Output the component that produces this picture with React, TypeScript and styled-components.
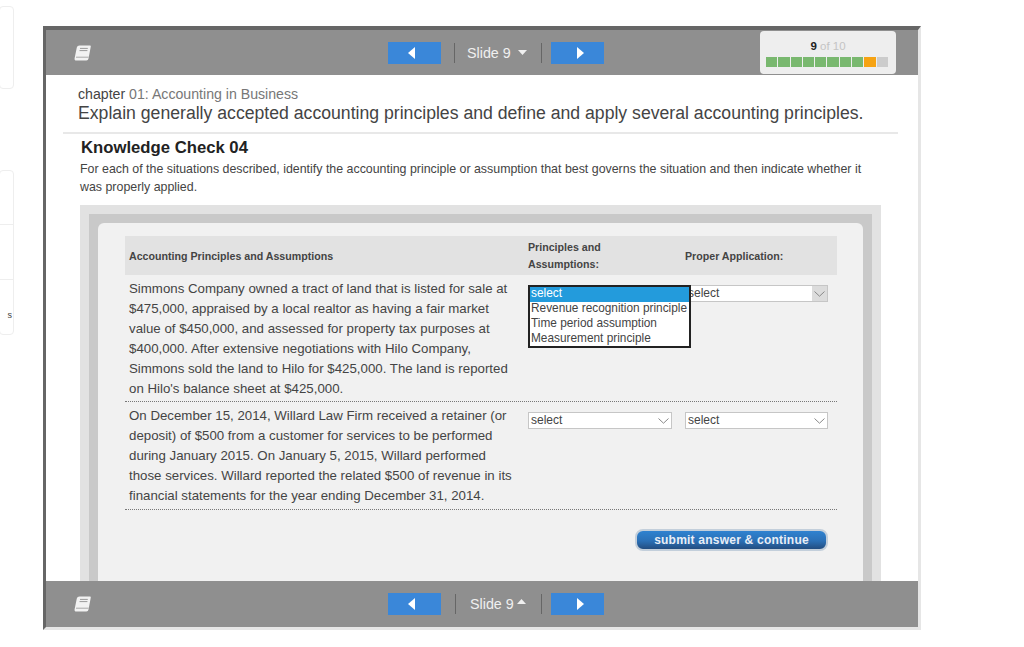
import { createGlobalStyle, styled } from "styled-components";

const GlobalStyle = createGlobalStyle`
  html, body {
    margin: 0;
    padding: 0;
    background: #fff;
    font-family: "Liberation Sans", Arial, sans-serif;
  }
`;

const Page = styled.div`
  display: flex;
  width: 1024px;
  height: 647px;
  overflow: hidden;
  background: #fff;
`;

const Sidebar = styled.aside`
  display: flex;
  flex-direction: column;
  width: 15px;
  margin-left: -1px;
  padding-top: 6px;
  gap: 81px;
  flex: none;
`;

const SideCard = styled.div`
  box-sizing: border-box;
  border: 1px solid #eeeeee;
  border-radius: 4px;
  background: #fff;
`;

const SideRow = styled.div<{ $height: number }>`
  box-sizing: border-box;
  height: ${({ $height }) => $height}px;
  border-bottom: 1px solid #eeeeee;
  font-size: 9px;
  line-height: ${({ $height }) => $height + 16}px;
  color: #444;
  text-align: right;
  padding-right: 1px;

  &:last-child {
    border-bottom: none;
  }
`;

const Frame = styled.div`
  box-sizing: border-box;
  width: 878px;
  height: 604px;
  margin: 26px 0 0 29px;
  display: flex;
  flex-direction: column;
  flex: none;
  border-top: 4px solid #666666;
  border-left: 3px solid #666666;
  border-right: 3px solid #e6e6e6;
  border-bottom: 3px solid #e6e6e6;
`;

const Bar = styled.div<{ $height: number }>`
  display: flex;
  align-items: center;
  height: ${({ $height }) => $height}px;
  flex: none;
  background: #8f8f8f;
`;

const BookButton = styled.div`
  display: flex;
  margin-left: 28px;
  width: 18px;
`;

const Nav = styled.nav`
  display: flex;
  align-items: center;
  margin-left: 296px;
  height: 22px;
`;

const NavButton = styled.div`
  box-sizing: border-box;
  display: flex;
  align-items: center;
  justify-content: center;
  width: 53px;
  height: 22px;
  padding-right: 6px;
  background: #3a87d9;
`;

const NextButton = styled(NavButton)`
  margin-left: 9px;
  padding-right: 0;
  padding-left: 5px;
`;

const Separator = styled.div<{ $gap?: number }>`
  width: 1px;
  height: 20px;
  margin-left: ${({ $gap = 0 }) => $gap}px;
  background: #666;
`;

const SlideLabel = styled.div<{ $width: number; $indent: number }>`
  display: flex;
  align-items: center;
  box-sizing: border-box;
  width: ${({ $width }) => $width}px;
  padding-left: ${({ $indent }) => $indent}px;
  font-size: 14.3px;
  color: #f0f0f0;
  white-space: nowrap;
`;

const CaretSlot = styled.span<{ $up?: boolean }>`
  display: flex;
  margin-left: ${({ $up }) => ($up ? 3 : 7)}px;
  margin-bottom: ${({ $up }) => ($up ? 6 : 0)}px;
`;

const Progress = styled.div`
  box-sizing: border-box;
  width: 136px;
  height: 43px;
  margin-left: auto;
  margin-right: 22px;
  padding: 9px 6px 0;
  background: #eeeeee;
  border-radius: 4px;
`;

const ProgressText = styled.div`
  font-size: 11.5px;
  line-height: 12px;
  text-align: center;
  color: #c4c4c4;

  b {
    color: #222;
  }
`;

const Steps = styled.div`
  display: flex;
  gap: 1px;
  margin-top: 5px;
`;

const Step = styled.div<{ $color: string }>`
  width: 11.3px;
  height: 10px;
  background: ${({ $color }) => $color};
`;

const Body = styled.main`
  flex: 1;
  min-height: 0;
  overflow: hidden;
  background: #fff;
  display: flex;
  flex-direction: column;
`;

const Heading = styled.header`
  box-sizing: border-box;
  height: 59px;
  margin: 0 20px 0 17px;
  padding: 11px 0 0 15px;
  border-bottom: 2px solid #e8e8e8;
  flex: none;
`;

const Chapter = styled.div`
  font-size: 14.15px;
  line-height: 17px;
  color: #777;

  b {
    font-weight: normal;
    color: #444;
  }
`;

const Title = styled.h1`
  margin: 0;
  font-size: 17.65px;
  font-weight: normal;
  line-height: 21px;
  color: #444;
  white-space: nowrap;
`;

const Content = styled.section`
  padding: 4px 37px 0 35px;
  flex: 1;
  display: flex;
  flex-direction: column;
  min-height: 0;
`;

const CheckTitle = styled.h2`
  margin: 0;
  font-size: 16.7px;
  line-height: 20px;
  color: #222;
`;

const Prompt = styled.p`
  max-width: 788px;
  margin: 2px 0 9px -1px;
  font-size: 12.4px;
  line-height: 18px;
  color: #444;
`;

const OuterBox = styled.div`
  flex: 1;
  margin-left: -1px;
  padding: 9px 9px 0;
  background: #e2e2e2;
  display: flex;
`;

const MiddleBox = styled.div`
  flex: 1;
  padding: 9px 9px 0;
  background: #c9c9c9;
  display: flex;
`;

const Panel = styled.div`
  flex: 1;
  box-sizing: border-box;
  padding: 13px 26px 0 27px;
  background: #f1f1f1;
  border-radius: 6px 6px 0 0;
`;

const QuizRow = styled.div`
  display: grid;
  grid-template-columns: 403px 157px 152px;
`;

const HeaderRow = styled(QuizRow)`
  box-sizing: border-box;
  height: 39px;
  padding-top: 1px;
  align-items: center;
  background: #e2e2e2;
  font-size: 10.65px;
  font-weight: bold;
  line-height: 17px;
  color: #444;
`;

const FirstHeader = styled.div`
  padding-left: 4px;
`;

const Question = styled(QuizRow)<{ $bottom: number }>`
  padding: 4px 0 ${({ $bottom }) => $bottom}px;
  border-bottom: 1px dotted #777;
`;

const QuestionText = styled.div`
  padding-left: 4px;
  width: 386px;
  font-size: 13.27px;
  line-height: 20px;
  color: #444;
`;

const SelectCell = styled.div`
  position: relative;
  padding-top: 6px;
`;

const Select = styled.div<{ $width: number }>`
  box-sizing: border-box;
  display: flex;
  align-items: center;
  justify-content: space-between;
  width: ${({ $width }) => $width}px;
  height: 17px;
  padding: 0 0 2px 2px;
  background: #fff;
  border: 1px solid #c6c6c6;
  font-size: 12px;
  color: #444;
`;

const Chevron = styled.span<{ $boxed?: boolean }>`
  display: flex;
  align-self: flex-start;
  align-items: center;
  justify-content: center;
  width: 15px;
  height: 15px;
  background: ${({ $boxed }) => ($boxed ? "#dcdcdc" : "transparent")};
`;

const Dropdown = styled.ul`
  position: absolute;
  top: 6px;
  left: 0;
  box-sizing: border-box;
  width: 163px;
  height: 63px;
  margin: 0;
  padding: 0;
  list-style: none;
  background: #fff;
  border: 2px solid #222;
  z-index: 2;
`;

const Option = styled.li<{ $active?: boolean }>`
  height: 15px;
  padding-left: 1px;
  font-size: 11.85px;
  line-height: 13px;
  white-space: nowrap;
  color: ${({ $active }) => ($active ? "#fff" : "#444")};
  background: ${({ $active }) => ($active ? "#239bdc" : "transparent")};
`;

const Actions = styled.div`
  display: flex;
  justify-content: flex-end;
  width: 703px;
  margin-top: 19px;
`;

const SubmitButton = styled.button`
  box-sizing: border-box;
  width: 193px;
  height: 22px;
  padding: 0 0 1px;
  border: 2px solid #c3cfdb;
  border-radius: 8px;
  background: linear-gradient(#2f82d0, #2b70b6 55%, #234d80);
  font-family: inherit;
  font-size: 12.05px;
  font-weight: bold;
  letter-spacing: 0.2px;
  color: #e8eef6;
`;

const STEP_COLORS = [...Array(8).fill("#79b86f"), "#f6a313", "#cccccc"];

const OPTIONS = [
  "select",
  "Revenue recognition principle",
  "Time period assumption",
  "Measurement principle",
];

function BookIcon() {
  return (
    <svg width="18" height="16" viewBox="0 0 18 16">
      <path
        d="M5.5 0.5 H16 Q17 0.5 16.8 1.6 L14.5 13.6 Q14.2 15.5 12.4 15.5 H2.4 Q0.2 15.5 0.6 13.2 L2.8 2.4 Q3.2 0.5 5.5 0.5 Z"
        fill="#f2f2f2"
      />
      <path d="M6 3.4 H13.8 M5.5 5.6 H13.4" stroke="#9a9a9a" strokeWidth="1" />
      <path d="M2 12.2 H14.6" stroke="#a8a8a8" strokeWidth="1" />
    </svg>
  );
}

function Arrow({ dir }: { dir: "left" | "right" }) {
  return (
    <svg width="7" height="12" viewBox="0 0 7 12">
      <path d={dir === "left" ? "M7 0 V12 L0 6 Z" : "M0 0 V12 L7 6 Z"} fill="#fff" />
    </svg>
  );
}

function Caret({ up }: { up?: boolean }) {
  return (
    <CaretSlot $up={up}>
      <svg width="9" height="5" viewBox="0 0 9 5">
        <path d={up ? "M0 5 H9 L4.5 0 Z" : "M0 0 H9 L4.5 5 Z"} fill="#f0f0f0" />
      </svg>
    </CaretSlot>
  );
}

function SelectBox({ width, boxed }: { width: number; boxed?: boolean }) {
  return (
    <Select $width={width}>
      select
      <Chevron $boxed={boxed}>
        <svg width="11" height="6" viewBox="0 0 11 6">
          <path d="M0.5 0.5 L5.5 5.2 L10.5 0.5" fill="none" stroke="#888" strokeWidth="1" />
        </svg>
      </Chevron>
    </Select>
  );
}

export default function App() {
  return (
    <Page>
      <GlobalStyle />
      <Sidebar>
        <SideCard>
          <SideRow $height={81} />
        </SideCard>
        <SideCard>
          <SideRow $height={54} />
          <SideRow $height={55} />
          <SideRow $height={54}>s</SideRow>
        </SideCard>
      </Sidebar>
      <Frame>
        <Bar $height={45}>
          <BookButton>
            <BookIcon />
          </BookButton>
          <Nav>
            <NavButton>
              <Arrow dir="left" />
            </NavButton>
            <Separator $gap={13} />
            <SlideLabel $width={86} $indent={12}>
              Slide 9
              <Caret />
            </SlideLabel>
            <Separator />
            <NextButton>
              <Arrow dir="right" />
            </NextButton>
          </Nav>
          <Progress>
            <ProgressText>
              <b>9</b> of 10
            </ProgressText>
            <Steps>
              {STEP_COLORS.map((color, i) => (
                <Step key={i} $color={color} />
              ))}
            </Steps>
          </Progress>
        </Bar>
        <Body>
          <Heading>
            <Chapter>
              <b>chapter</b> 01: Accounting in Business
            </Chapter>
            <Title>
              Explain generally accepted accounting principles and define and apply several
              accounting principles.
            </Title>
          </Heading>
          <Content>
            <CheckTitle>Knowledge Check 04</CheckTitle>
            <Prompt>
              For each of the situations described, identify the accounting principle or
              assumption that best governs the situation and then indicate whether it was properly
              applied.
            </Prompt>
            <OuterBox>
              <MiddleBox>
                <Panel>
                  <HeaderRow>
                    <FirstHeader>Accounting Principles and Assumptions</FirstHeader>
                    <div>
                      Principles and
                      <br />
                      Assumptions:
                    </div>
                    <div>Proper Application:</div>
                  </HeaderRow>
                  <Question $bottom={2}>
                    <QuestionText>
                      Simmons Company owned a tract of land that is listed for sale at $475,000,
                      appraised by a local realtor as having a fair market value of $450,000, and
                      assessed for property tax purposes at $400,000. After extensive negotiations
                      with Hilo Company, Simmons sold the land to Hilo for $425,000. The land is
                      reported on Hilo's balance sheet at $425,000.
                    </QuestionText>
                    <SelectCell>
                      <Dropdown>
                        {OPTIONS.map((option, i) => (
                          <Option key={option} $active={i === 0}>
                            {option}
                          </Option>
                        ))}
                      </Dropdown>
                    </SelectCell>
                    <SelectCell>
                      <SelectBox width={143} boxed />
                    </SelectCell>
                  </Question>
                  <Question $bottom={3}>
                    <QuestionText>
                      On December 15, 2014, Willard Law Firm received a retainer (or deposit) of
                      $500 from a customer for services to be performed during January 2015. On
                      January 5, 2015, Willard performed those services. Willard reported the
                      related $500 of revenue in its financial statements for the year ending
                      December 31, 2014.
                    </QuestionText>
                    <SelectCell>
                      <SelectBox width={144} />
                    </SelectCell>
                    <SelectCell>
                      <SelectBox width={143} />
                    </SelectCell>
                  </Question>
                  <Actions>
                    <SubmitButton>submit answer &amp; continue</SubmitButton>
                  </Actions>
                </Panel>
              </MiddleBox>
            </OuterBox>
          </Content>
        </Body>
        <Bar $height={46}>
          <BookButton>
            <BookIcon />
          </BookButton>
          <Nav>
            <NavButton>
              <Arrow dir="left" />
            </NavButton>
            <Separator $gap={14} />
            <SlideLabel $width={85} $indent={14}>
              Slide 9
              <Caret up />
            </SlideLabel>
            <Separator />
            <NextButton>
              <Arrow dir="right" />
            </NextButton>
          </Nav>
        </Bar>
      </Frame>
    </Page>
  );
}
